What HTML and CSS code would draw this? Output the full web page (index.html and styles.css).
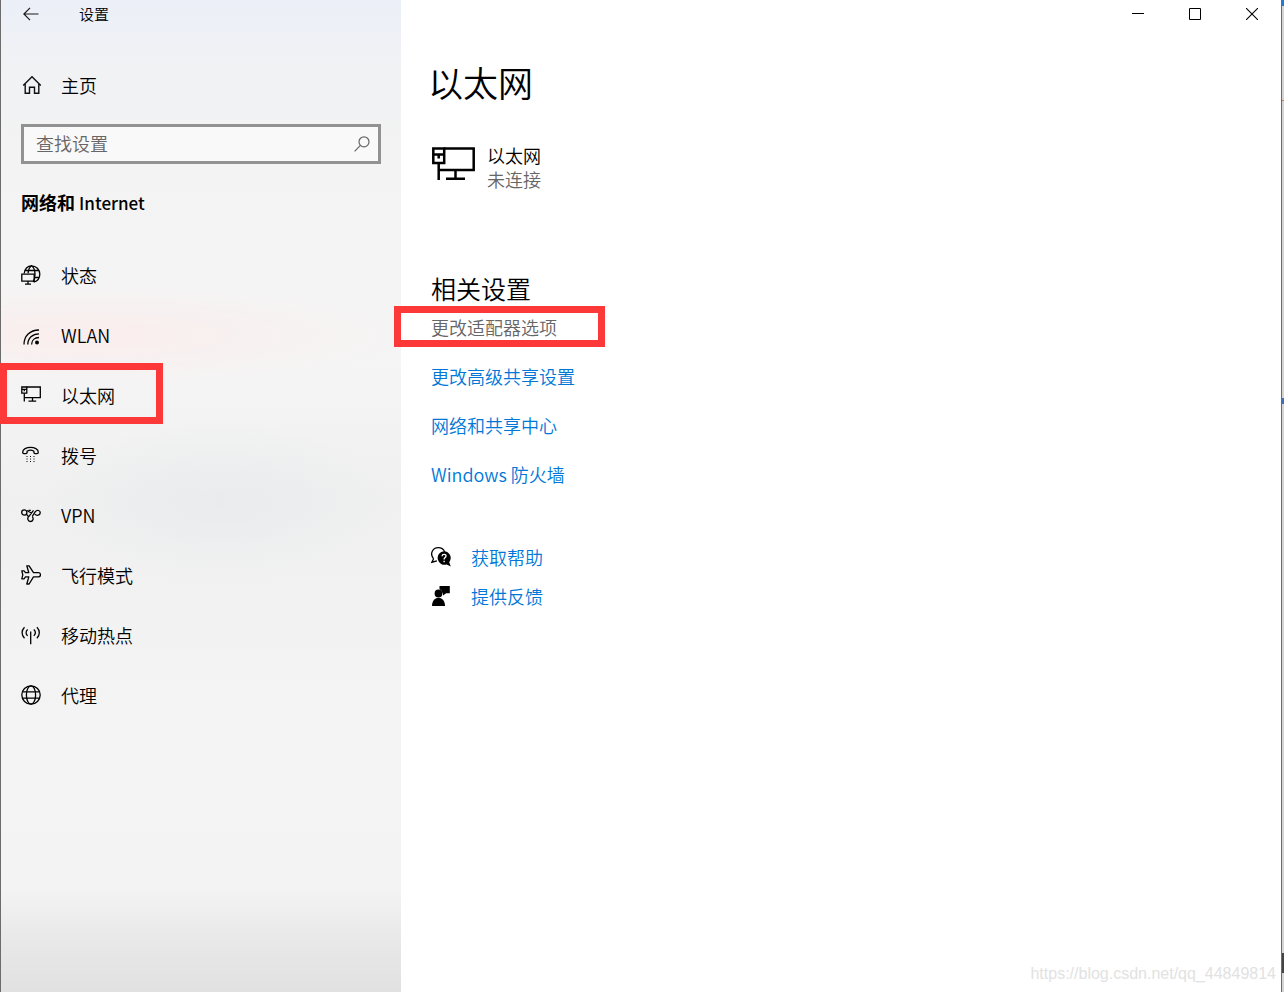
FILE: index.html
```html
<!DOCTYPE html>
<html lang="zh-CN">
<head>
<meta charset="utf-8">
<title>设置</title>
<link rel="stylesheet" href="styles.css">
</head>
<body>
<div class="window">
  <aside class="sidebar">
    <header class="titlebar">
      <button class="back" type="button" aria-label="返回">
        <svg width="16" height="14" viewBox="0 0 16 14" fill="none" stroke="#1a1a1a" stroke-width="1.2"><path d="M7 .8.9 7 7 13.200M1 7h14.500"/></svg>
      </button>
      <span class="app-title">设置</span>
    </header>
    <a class="home" href="#">
      <svg width="20" height="20" viewBox="0 0 20 20" fill="none" stroke="#111" stroke-width="1.400"><path d="M1.200 10.500 10 1.800l8.800 8.700M3.200 8.800v9.500h4.300v-6h5v6h4.300V8.800"/></svg>
      <span>主页</span>
    </a>
    <label class="search">
      <input type="text" placeholder="查找设置" aria-label="查找设置">
      <svg width="16" height="16" viewBox="0 0 16 16" fill="none" stroke="#666" stroke-width="1.200"><circle cx="10" cy="5.800" r="5"/><path d="M6.400 9.400.6 15.300"/></svg>
    </label>
    <h2 class="category">网络和 <span class="latin">Internet</span></h2>
    <nav class="nav">
      <a class="nav-item" href="#">
        <svg width="20" height="20" viewBox="0 0 20 20" fill="none" stroke="#000" stroke-width="1.300"><path d="M3.200 8.500C3.500 4 6.500.8 10.500.8c4.600 0 8.300 3.700 8.300 8.300 0 4-2.600 7.200-6 8.100M4.200 5.500h13.200M13.500 12.500h4.600M10.500.8c-2 1.500-3.200 4-3.400 7.500M10.500.8c2.500 1.800 3.500 4.600 3.500 8.200 0 3.300-.6 6-1.800 8"/><path d="M.8 9.200h12.400v7H.8zM7 16.200v3M4 19.200h6"/></svg>
        <span>状态</span>
      </a>
      <a class="nav-item" href="#">
        <svg width="20" height="20" viewBox="0 0 20 20" fill="none" stroke="#000" stroke-width="1.300"><path d="M3 19.500C3 11 9 5 18 5M6.800 19.500C6.800 13.200 11.500 8.800 18 8.800M10.600 19.500c0-4.300 3.100-7 7.400-7"/><circle cx="16" cy="17.600" r="2" fill="#000" stroke="none"/></svg>
        <span>WLAN</span>
      </a>
      <a class="nav-item marked" href="#">
        <svg width="20" height="20" viewBox="0 0 20 20" fill="none" stroke="#000" stroke-width="1.300"><path d="M5.500 2H19.300V12.600H4M11.500 12.600v3.600M7.500 16.200h7.700M3.300 8.200v8.300"/><path d="M.8 2h5v6.200h-5zM.8 4.300h5M3.300 4.300v2"/></svg>
        <span>以太网</span>
      </a>
      <a class="nav-item" href="#">
        <svg width="20" height="20" viewBox="0 0 20 20" fill="none" stroke="#000" stroke-width="1.300"><path d="M1.700 7.300C1.700.8 17.300.8 17.300 7.300c0 1-.5 1.300-1.200 1.300h-2c-.8 0-1.200-.3-1.200-1.100V6.200C11 5.100 8 5.100 6.100 6.200v1.300c0 .8-.4 1.100-1.200 1.100h-2c-.7 0-1.200-.3-1.200-1.300z"/><path d="M5.500 11.500h1M9 11.500h1M12.500 11.500h1M5.500 14h1M9 14h1M12.500 14h1M5.500 16.500h1M9 16.500h1M12.500 16.500h1" stroke-width="1"/></svg>
        <span>拨号</span>
      </a>
      <a class="nav-item" href="#">
        <svg width="20" height="20" viewBox="0 0 20 20" fill="none" stroke="#000" stroke-width="1.300"><circle cx="3.300" cy="7.500" r="2.600"/><path d="M5.300 9.100c1 1.200 1.700 2 2.400 2.700M5.900 5.500l4.800 2.700M7.500 5.300h2.300M12.500 5.300 8 11.300c-2.200 1.800-1.100 5.200 1.400 5.200 2.600 0 3.500-3 1.900-4.900M11.300 11.400l3-4.700c2-2.600 5.100-1 4.900 1.200-.2 2.600-3.700 3.200-5.300 1.200"/></svg>
        <span>VPN</span>
      </a>
      <a class="nav-item" href="#">
        <svg width="20" height="20" viewBox="0 0 20 20" fill="none" stroke="#000" stroke-width="1.300" stroke-linejoin="round"><path d="M5.800.8h2.300l4.400 6.900h4.700c1.400 0 2.300.9 2.300 2.100s-.9 2.100-2.300 2.100h-4.700L8.100 19H5.800l2-7.100H4.500L3 13.800H.8l1-4-1-4H3l1.500 1.900h3.300z"/></svg>
        <span>飞行模式</span>
      </a>
      <a class="nav-item" href="#">
        <svg width="20" height="20" viewBox="0 0 20 20" fill="none" stroke="#000" stroke-width="1.300"><path d="M9.700 6.500v12.700M3.500 2.200c-3.200 3.200-3.200 7.800 0 11M6.600 4.500c-2 2-2 4.400 0 6.400M15.900 2.200c3.200 3.200 3.200 7.800 0 11M12.800 4.500c2 2 2 4.400 0 6.400"/></svg>
        <span>移动热点</span>
      </a>
      <a class="nav-item" href="#">
        <svg width="20" height="20" viewBox="0 0 20 20" fill="none" stroke="#000" stroke-width="1.300"><circle cx="10" cy="10" r="9.200"/><ellipse cx="10" cy="10" rx="4.600" ry="9.200"/><path d="M1.800 6.800h16.400M1.800 13.200h16.400"/></svg>
        <span>代理</span>
      </a>
    </nav>
  </aside>
  <main class="content">
    <div class="controls">
      <button type="button" aria-label="最小化"><svg width="12" height="12" viewBox="0 0 12 12" stroke="#000"><path d="M0 5.500h12"/></svg></button>
      <button type="button" aria-label="最大化"><svg width="12" height="12" viewBox="0 0 12 12" fill="none" stroke="#000"><path d="M.5.500h11v11H.5z"/></svg></button>
      <button type="button" aria-label="关闭"><svg width="12" height="12" viewBox="0 0 12 12" stroke="#000" stroke-width="1.100"><path d="m0 0 12 12M12 0 0 12"/></svg></button>
    </div>
    <h1 class="page-title">以太网</h1>
    <section class="adapter">
      <svg width="44" height="34" viewBox="0 0 44 34" fill="none" stroke="#000" stroke-width="2.500"><path d="M13 1.500h29.700v21.500H8M24.500 23v9M15 31.700h19M7.700 16v17"/><path d="M2.300 1.500h10.900v14.500H2.300zM2.300 7.500H13M7.700 7.500v4"/></svg>
      <div class="adapter-text">
        <div>以太网</div>
        <div class="status">未连接</div>
      </div>
    </section>
    <h2 class="related-title">相关设置</h2>
    <div class="links">
      <a class="link hovered" href="#">更改适配器选项</a>
      <a class="link" href="#">更改高级共享设置</a>
      <a class="link" href="#">网络和共享中心</a>
      <a class="link" href="#">Windows 防火墙</a>
    </div>
    <div class="support">
      <a class="support-link" href="#">
        <svg width="20" height="20" viewBox="0 0 20 20"><path d="M2.600 11.800C-1.800 6.500 2 .7 7.200.7c3 0 5.400 1.600 6.400 4M2.600 11.800.9 15.200l5-1.400" fill="none" stroke="#000" stroke-width="1.300"/><path d="M13 4.200a6.800 6.800 0 1 0 2.700 13.200l4.100 2-1.600-4.200A6.800 6.800 0 0 0 13 4.200z"/><path d="M11 9.200c.2-2.700 4.300-2.300 4 0-.2 1.400-1.900 1.500-1.900 3.200M13.100 13.700v1.500" fill="none" stroke="#fff" stroke-width="1.300"/></svg>
        <span>获取帮助</span>
      </a>
      <a class="support-link" href="#">
        <svg width="20" height="20" viewBox="0 0 20 20"><path d="M8.500 0h10.300v7.200h-3.600L12 9.500V7.200h-.5A5 5 0 0 0 8.500 3z"/><circle cx="7.500" cy="7.500" r="3.900"/><path d="M1 20c0-11 13-11 13 0z"/></svg>
        <span>提供反馈</span>
      </a>
    </div>
    <footer class="watermark">https://blog.csdn.net/qq_44849814</footer>
  </main>
  <div class="desktop-edge"></div>
</div>
</body>
</html>
```
FILE: styles.css
```css
*,
*::before,
*::after {
  box-sizing: border-box;
}

body {
  margin: 0;
  font: 18px/24px "Noto Sans CJK SC", sans-serif;
  font-weight: 350;
  color: #000;
  background: #fff;
}

a {
  color: inherit;
  text-decoration: none;
}

svg {
  display: block;
  flex: none;
}

button {
  display: grid;
  place-items: center;
  padding: 0;
  border: 0;
  background: none;
}

h1,
h2 {
  margin: 0;
}

.window {
  display: grid;
  grid-template-columns: 401px 1fr 3px;
  min-height: 100vh;
}

.sidebar {
  padding: 0 20px;
  border-left: 1px solid #6c6c6c;
  background:
    radial-gradient(ellipse 180px 80px at 220px 500px, rgba(226, 230, 233, 0.5), transparent),
    radial-gradient(ellipse 330px 52px at 90px 335px, rgba(255, 232, 232, 0.6), transparent),
    linear-gradient(#ebeff8, #f1f2f4 70px, #f3f3f3 160px, #f5f5f5 360px, #f0f0f0 500px, #f4f4f4 720px, #f3f3f3 890px, #e8e8e8 940px, #e1e1e1);
}

.titlebar {
  display: flex;
  align-items: center;
  gap: 38px;
  height: 28px;
  font-size: 15px;
}

.back {
  width: 20px;
  height: 28px;
}

.app-title {
  line-height: 28px;
}

.home {
  display: flex;
  align-items: center;
  gap: 19px;
  height: 48px;
  margin-top: 33px;
  padding-left: 1px;
}

.search {
  display: flex;
  align-items: center;
  height: 40px;
  margin-top: 15px;
  padding: 0 8px 0 12px;
  border: 3px solid #929292;
  background: rgba(255, 255, 255, 0.5);
}

.search input {
  flex: 1;
  min-width: 0;
  padding: 0 0 2px;
  border: 0;
  outline: 0;
  background: none;
  font: inherit;
}

.search input::placeholder {
  color: #666;
}

.category {
  margin-top: 26px;
  font-size: 18px;
  line-height: 24px;
  font-weight: 700;
}

.latin {
  font-size: 17px;
  font-weight: 500;
}

.nav {
  margin-top: 30px;
}

.nav-item {
  position: relative;
  display: flex;
  align-items: center;
  gap: 20px;
  height: 60px;
}

.marked::after {
  content: "";
  position: absolute;
  top: -2px;
  left: -21px;
  width: 163px;
  height: 61px;
  border: 7px solid #fc3838;
}

.content {
  display: flex;
  flex-direction: column;
  padding-left: 30px;
}

.controls {
  display: flex;
  justify-content: flex-end;
  padding-right: 1px;
}

.controls button {
  width: 57px;
  height: 28px;
}

.page-title {
  margin: 30px 0 0 -3px;
  font-size: 35px;
  line-height: 48px;
  font-weight: 350;
}

.adapter {
  display: flex;
  gap: 12px;
  align-items: center;
  margin-top: 37px;
}

.adapter svg {
  margin-bottom: 7px;
}

.status {
  color: #666;
}

.related-title {
  margin-top: 81px;
  font-size: 25px;
  line-height: 32px;
  font-weight: 350;
}

.links {
  display: flex;
  flex-direction: column;
  align-items: flex-start;
  gap: 25px;
  margin-top: 11px;
}

.link {
  position: relative;
  color: #0077d7;
}

.hovered {
  color: #666;
}

.hovered::after {
  content: "";
  position: absolute;
  top: -9px;
  left: -37px;
  width: 211px;
  height: 41px;
  border: 7px solid #fc3838;
}

.support {
  display: grid;
  gap: 15px;
  justify-content: start;
  margin-top: 59px;
}

.support-link {
  display: flex;
  align-items: center;
  gap: 20px;
  color: #0077d7;
}

.watermark {
  margin-top: auto;
  padding: 0 5px 6px 0;
  text-align: right;
  font: 16px/24px "Liberation Sans", Arial, sans-serif;
  color: #e2e2e2;
}

.desktop-edge {
  border-left: 1px solid #6c6c6c;
  background: linear-gradient(#2878d0 6px, #d4d4d4 6px 100px, #e07050 100px 101px, #d4d4d4 101px 398px, #4070b0 398px 404px, #d4d4d4 404px 953px, #444 953px 973px, #d4d4d4 973px);
}
```
